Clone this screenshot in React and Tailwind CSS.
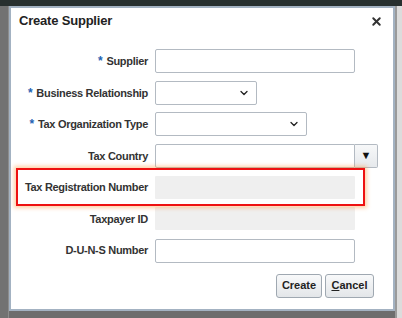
import React from 'react';
import { X, ChevronDown } from 'lucide-react';

const Label = ({ text, required }) => (
  <div className="w-[137px] shrink-0 text-right text-[11px] font-bold text-[#333333] tracking-[-0.3px] whitespace-nowrap">
    {required && <span className="text-[#1f63b3] mr-[4px] text-[12px]">*</span>}
    {text}
  </div>
);

const TextBox = ({ width = 'w-[200px]' }) => (
  <div className={`${width} h-[24px] bg-white border border-[#b3bac2] rounded-[2px]`} />
);

const ReadOnly = () => <div className="w-[200px] h-[23px] bg-[#efefef] rounded-[1px]" />;

const Select = ({ width }) => (
  <div className={`${width} h-[24px] bg-white border border-[#b3bac2] rounded-[2px] flex items-center justify-end pr-[6px]`}>
    <ChevronDown size={12} strokeWidth={2.6} className="text-[#222]" />
  </div>
);

const Row = ({ children, className = '' }) => (
  <div className={`flex items-center gap-[7px] h-[24px] ${className}`}>{children}</div>
);

const App = () => {
  return (
    <div className="w-[402px] h-[318px] overflow-hidden bg-[#6d6d6d] font-['Liberation_Sans',Arial,sans-serif]">
      <div className="h-[6px] bg-[#28302f]" />
      <div className="flex h-[312px]">
        <div className="w-[9px] bg-[#727272] border-r border-[#8d8d8d]" />
        <div className="w-[386px] h-[305px] bg-white border-2 border-[#a3b2c2] flex flex-col">
          <div className="h-[26px] flex items-center justify-between pl-[8px] pr-[10px]">
            <h1 className="text-[13px] font-bold text-[#222] tracking-[-0.2px]">Create Supplier</h1>
            <X size={13} strokeWidth={3.6} className="text-[#333]" />
          </div>

          <div className="mt-[15px] flex flex-col gap-[7.6px]">
            <Row>
              <Label text="Supplier" required />
              <TextBox />
            </Row>
            <Row>
              <Label text="Business Relationship" required />
              <Select width="w-[102px]" />
            </Row>
            <Row>
              <Label text="Tax Organization Type" required />
              <Select width="w-[152px]" />
            </Row>
            <Row>
              <Label text="Tax Country" />
              <div className="flex h-[24px]">
                <div className="w-[200px] h-full bg-white border border-[#b3bac2] rounded-l-[2px]" />
                <div className="w-[23px] h-full bg-gradient-to-b from-[#f7f8f9] to-[#e6e9ec] border border-l-0 border-[#b3bac2] rounded-r-[2px] flex items-center justify-center">
                  <span className="text-[11px] text-[#111] leading-none">▼</span>
                </div>
              </div>
            </Row>
            <Row className="relative">
              <Label text="Tax Registration Number" />
              <ReadOnly />
              <div className="absolute left-[5px] top-[-7px] w-[349px] h-[38px] border-2 border-[#ee1111] shadow-[0_0_4px_2px_rgba(255,150,60,0.45)]" />
            </Row>
            <Row>
              <Label text="Taxpayer ID" />
              <ReadOnly />
            </Row>
            <Row>
              <Label text="D-U-N-S Number" />
              <TextBox />
            </Row>
          </div>

          <div className="mt-[11px] flex justify-end gap-[3px] pr-[19px]">
            <button className="w-[46px] h-[24px] rounded-[3px] border border-[#9fa8b1] bg-gradient-to-b from-[#f8f9fa] to-[#e3e6e9] text-[11px] font-bold text-[#222]">
              Create
            </button>
            <button className="w-[49px] h-[24px] rounded-[3px] border border-[#9fa8b1] bg-gradient-to-b from-[#f8f9fa] to-[#e3e6e9] text-[11px] font-bold text-[#222]">
              <span className="underline">C</span>ancel
            </button>
          </div>
        </div>
        <div className="flex-1 bg-[#dcdcdc] border-l-2 border-[#9a9a9a]" />
      </div>
    </div>
  );
};

export default App;
